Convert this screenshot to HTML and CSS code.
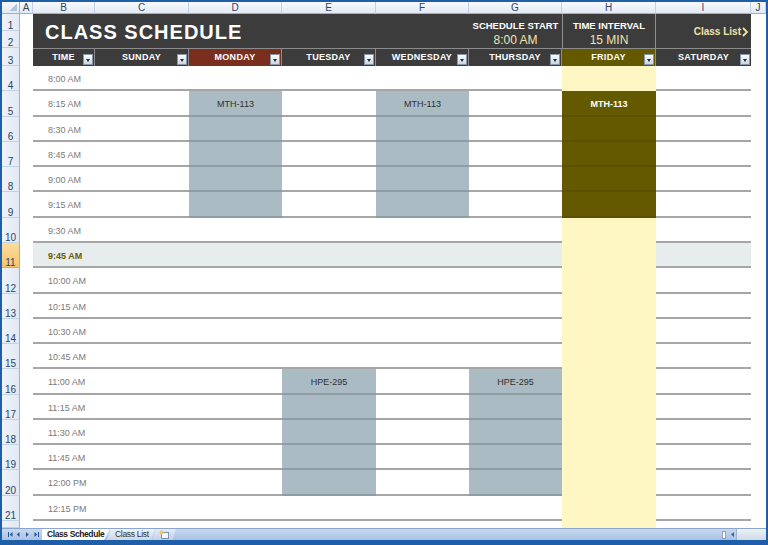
FILE: index.html
```html
<!DOCTYPE html>
<html>
<head>
<meta charset="utf-8">
<title>Class Schedule</title>
<link rel="stylesheet" href="styles.css">
</head>
<body>
<div class="window">
  <div class="sheet">
    <!-- column letters -->
    <div class="corner"></div>
    <div class="ch">A</div><div class="ch">B</div><div class="ch">C</div><div class="ch">D</div><div class="ch">E</div>
    <div class="ch">F</div><div class="ch">G</div><div class="ch">H</div><div class="ch">I</div><div class="ch">J</div>

    <!-- rows 1-2: banner -->
    <div class="rh">1</div>
    <div class="a span2"></div>
    <div class="band title">CLASS SCHEDULE</div>
    <div class="band info span2"><span class="lbl">SCHEDULE START</span><span class="val">8:00 AM</span></div>
    <div class="band info sep span2"><span class="lbl">TIME INTERVAL</span><span class="val">15 MIN</span></div>
    <div class="band link span2">Class List<svg class="chev" width="6" height="10" viewBox="0 0 6 10"><path d="M1 1 L5 5 L1 9" fill="none" stroke="#f1e3a9" stroke-width="1.8"/></svg></div>
    <div class="j span2"></div>
    <div class="rh">2</div>

    <!-- row 3: day headers -->
    <div class="rh">3</div><div class="a"></div>
    <div class="day">TIME<span class="dd"></span></div>
    <div class="day">SUNDAY<span class="dd"></span></div>
    <div class="day mon">MONDAY<span class="dd"></span></div>
    <div class="day">TUESDAY<span class="dd"></span></div>
    <div class="day">WEDNESDAY<span class="dd"></span></div>
    <div class="day">THURSDAY<span class="dd"></span></div>
    <div class="day fri">FRIDAY<span class="dd"></span></div>
    <div class="day last">SATURDAY<span class="dd"></span></div>
    <div class="j"></div>

    <!-- row 4 -->
    <div class="rh">4</div><div class="a"></div>
    <div class="c t">8:00 AM</div><div class="c"></div><div class="c"></div><div class="c"></div><div class="c"></div><div class="c"></div><div class="c y"></div><div class="c"></div><div class="j"></div>
    <!-- row 5 -->
    <div class="rh">5</div><div class="a"></div>
    <div class="c t">8:15 AM</div><div class="c"></div><div class="c blk">MTH-113</div><div class="c"></div><div class="c blk">MTH-113</div><div class="c"></div><div class="c ob">MTH-113</div><div class="c"></div><div class="j"></div>
    <!-- row 6 -->
    <div class="rh">6</div><div class="a"></div>
    <div class="c t">8:30 AM</div><div class="c"></div><div class="c blk"></div><div class="c"></div><div class="c blk"></div><div class="c"></div><div class="c ob"></div><div class="c"></div><div class="j"></div>
    <!-- row 7 -->
    <div class="rh">7</div><div class="a"></div>
    <div class="c t">8:45 AM</div><div class="c"></div><div class="c blk"></div><div class="c"></div><div class="c blk"></div><div class="c"></div><div class="c ob"></div><div class="c"></div><div class="j"></div>
    <!-- row 8 -->
    <div class="rh">8</div><div class="a"></div>
    <div class="c t">9:00 AM</div><div class="c"></div><div class="c blk"></div><div class="c"></div><div class="c blk"></div><div class="c"></div><div class="c ob"></div><div class="c"></div><div class="j"></div>
    <!-- row 9 -->
    <div class="rh">9</div><div class="a"></div>
    <div class="c t">9:15 AM</div><div class="c"></div><div class="c blk"></div><div class="c"></div><div class="c blk"></div><div class="c"></div><div class="c ob"></div><div class="c"></div><div class="j"></div>
    <!-- row 10 -->
    <div class="rh">10</div><div class="a"></div>
    <div class="c t">9:30 AM</div><div class="c"></div><div class="c"></div><div class="c"></div><div class="c"></div><div class="c"></div><div class="c y"></div><div class="c"></div><div class="j"></div>
    <!-- row 11 (current) -->
    <div class="rh sel">11</div><div class="a"></div>
    <div class="c t hl now">9:45 AM</div><div class="c hl"></div><div class="c hl"></div><div class="c hl"></div><div class="c hl"></div><div class="c hl"></div><div class="c y"></div><div class="c hl"></div><div class="j"></div>
    <!-- row 12 -->
    <div class="rh">12</div><div class="a"></div>
    <div class="c t">10:00 AM</div><div class="c"></div><div class="c"></div><div class="c"></div><div class="c"></div><div class="c"></div><div class="c y"></div><div class="c"></div><div class="j"></div>
    <!-- row 13 -->
    <div class="rh">13</div><div class="a"></div>
    <div class="c t">10:15 AM</div><div class="c"></div><div class="c"></div><div class="c"></div><div class="c"></div><div class="c"></div><div class="c y"></div><div class="c"></div><div class="j"></div>
    <!-- row 14 -->
    <div class="rh">14</div><div class="a"></div>
    <div class="c t">10:30 AM</div><div class="c"></div><div class="c"></div><div class="c"></div><div class="c"></div><div class="c"></div><div class="c y"></div><div class="c"></div><div class="j"></div>
    <!-- row 15 -->
    <div class="rh">15</div><div class="a"></div>
    <div class="c t">10:45 AM</div><div class="c"></div><div class="c"></div><div class="c"></div><div class="c"></div><div class="c"></div><div class="c y"></div><div class="c"></div><div class="j"></div>
    <!-- row 16 -->
    <div class="rh">16</div><div class="a"></div>
    <div class="c t">11:00 AM</div><div class="c"></div><div class="c"></div><div class="c blk">HPE-295</div><div class="c"></div><div class="c blk">HPE-295</div><div class="c y"></div><div class="c"></div><div class="j"></div>
    <!-- row 17 -->
    <div class="rh">17</div><div class="a"></div>
    <div class="c t">11:15 AM</div><div class="c"></div><div class="c"></div><div class="c blk"></div><div class="c"></div><div class="c blk"></div><div class="c y"></div><div class="c"></div><div class="j"></div>
    <!-- row 18 -->
    <div class="rh">18</div><div class="a"></div>
    <div class="c t">11:30 AM</div><div class="c"></div><div class="c"></div><div class="c blk"></div><div class="c"></div><div class="c blk"></div><div class="c y"></div><div class="c"></div><div class="j"></div>
    <!-- row 19 -->
    <div class="rh">19</div><div class="a"></div>
    <div class="c t">11:45 AM</div><div class="c"></div><div class="c"></div><div class="c blk"></div><div class="c"></div><div class="c blk"></div><div class="c y"></div><div class="c"></div><div class="j"></div>
    <!-- row 20 -->
    <div class="rh">20</div><div class="a"></div>
    <div class="c t">12:00 PM</div><div class="c"></div><div class="c"></div><div class="c blk"></div><div class="c"></div><div class="c blk"></div><div class="c y"></div><div class="c"></div><div class="j"></div>
    <!-- row 21 -->
    <div class="rh">21</div><div class="a"></div>
    <div class="c t">12:15 PM</div><div class="c"></div><div class="c"></div><div class="c"></div><div class="c"></div><div class="c"></div><div class="c y"></div><div class="c"></div><div class="j"></div>
    <!-- row 22 (cut off) -->
    <div class="rh"></div><div class="a"></div>
    <div class="p"></div><div class="p"></div><div class="p"></div><div class="p"></div><div class="p"></div><div class="p"></div><div class="p y"></div><div class="p"></div><div class="j"></div>
  </div>

  <div class="tabbar">
    <div class="nav">
      <svg width="40" height="11" viewBox="0 0 40 11">
        <rect x="6" y="3" width="1" height="5" fill="#2456a0"/>
        <polygon points="10.5,3 10.5,8 7.8,5.5" fill="#2456a0"/>
        <polygon points="17.5,3 17.5,8 14.8,5.5" fill="#2456a0"/>
        <polygon points="24,3 24,8 26.7,5.5" fill="#2456a0"/>
        <polygon points="32.5,3 32.5,8 35.2,5.5" fill="#2456a0"/>
        <rect x="36" y="3" width="1" height="5" fill="#2456a0"/>
      </svg>
    </div>
    <div class="tab active">Class Schedule</div>
    <div class="tab other">Class List</div>
    <div class="tab newtab">
      <svg width="12" height="9" viewBox="0 0 12 9">
        <rect x="3.5" y="2.5" width="7" height="6" fill="#f4f6fa" stroke="#7f93b1" stroke-width="1"/>
        <circle cx="3.5" cy="2.5" r="2" fill="#f4c64a"/>
      </svg>
    </div>
    <div class="tabfill"></div>
    <div class="scrollctl">
      <span class="split"></span>
      <svg width="8" height="11" viewBox="0 0 8 11"><polygon points="6,3 6,8 3,5.5" fill="#44618c"/></svg>
      <span class="hbar"></span>
    </div>
  </div>
</div>
</body>
</html>
```

FILE: styles.css
```css
* { box-sizing: border-box; margin: 0; padding: 0; }
html, body { margin: 0; background: #ffffff; }
body { font-family: "Liberation Sans", Arial, sans-serif; }

.window {
  width: 768px;
  height: 545px;
  border: 2px solid #1f5fa9;
  border-bottom: 5px solid #1f5fa9;
  display: flex;
  flex-direction: column;
  overflow: hidden;
  background: #ffffff;
}

.sheet {
  display: grid;
  grid-template-columns: 18px 13px 62px 94px 93px 94px 93px 93px 94px 95px 15px;
  grid-template-rows: 12px 17px 17px 18px
    25px 26px 25px 25px 25px 26px 25px 25px 26px 25px 25px 25px 26px 25px 25px 25px 26px 25px
    7px;
  flex: none;
}

/* column letter headers */
.corner {
  background-image:
    linear-gradient(to top left, #b3c4da 0 50%, transparent 50%),
    linear-gradient(#f6f9fc, #e3eaf4);
  background-repeat: no-repeat, no-repeat;
  background-position: right 2px bottom 2px, 0 0;
  background-size: 8px 8px, 100% 100%;
  border-right: 1px solid #9db3cd;
  border-bottom: 1px solid #9db3cd;
}
.ch {
  background: linear-gradient(#f8fafd, #e3eaf4);
  border-right: 1px solid #c3d1e3;
  border-bottom: 1px solid #9db3cd;
  color: #2b4566;
  font-size: 10px;
  display: flex;
  align-items: center;
  justify-content: center;
  line-height: 1;
}

/* row number headers */
.rh {
  background: linear-gradient(90deg, #eef3fa, #e1e9f4);
  border-right: 1px solid #9db3cd;
  border-bottom: 1px solid #c3d1e3;
  color: #2b4566;
  font-size: 10px;
  line-height: 8px;
  display: flex;
  align-items: flex-end;
  justify-content: center;
  padding-bottom: 0;
}
.rh.sel {
  background: linear-gradient(#fbdc9f, #f7c46e);
  border-right-color: #e9a443;
  border-bottom-color: #e9a443;
}

.span2 { grid-row: span 2; }
.a, .j { background: #ffffff; }

/* banner */
.band { background: #3c3c3c; }
.title {
  grid-column: span 5;
  grid-row: span 2;
  color: #ffffff;
  font-weight: bold;
  font-size: 20px;
  letter-spacing: 1px;
  padding-left: 12px;
  display: flex;
  align-items: center;
  padding-top: 2px;
}
.info {
  display: flex;
  flex-direction: column;
  align-items: center;
  justify-content: center;
  gap: 4px;
  padding-top: 5px;
}
.info.sep {
  border-left: 1px solid #8e8e8e;
  border-right: 1px solid #8e8e8e;
}
.lbl {
  color: #ffffff;
  font-weight: bold;
  font-size: 9.5px;
  line-height: 1;
}
.val {
  color: #f1e3a9;
  font-size: 12px;
  line-height: 1;
}
.link {
  display: flex;
  align-items: center;
  justify-content: flex-end;
  gap: 1px;
  padding-right: 3px;
  padding-top: 1px;
  color: #f1e3a9;
  font-weight: bold;
  font-size: 10px;
}
.chev { display: block; }

/* day header row */
.day {
  position: relative;
  background: #3c3c3c;
  color: #ffffff;
  font-weight: bold;
  font-size: 9px;
  letter-spacing: 0.3px;
  border-top: 1px solid #8b8b8b;
  border-right: 1px solid #8b8b8b;
  display: flex;
  align-items: center;
  justify-content: center;
  line-height: 1;
}
.day.last { border-right: none; }
.day.mon { background: #7a2f1e; }
.day.fri { background: #655900; }
.dd {
  position: absolute;
  right: 1px;
  bottom: 1px;
  width: 10px;
  height: 11px;
  background: linear-gradient(#fbfcfd, #cdd5e0);
  border: 1px solid #8596ad;
}
.dd::after {
  content: "";
  position: absolute;
  left: 2px;
  top: 4px;
  border-left: 2.5px solid transparent;
  border-right: 2.5px solid transparent;
  border-top: 3px solid #1d2f4a;
}

/* data cells */
.c {
  border-bottom: 2px solid #a6a6a6;
  background: #ffffff;
  color: #2f2f2f;
  font-size: 9px;
  display: flex;
  align-items: center;
  justify-content: center;
  line-height: 1;
  padding-top: 3px;
}
.c.t {
  justify-content: flex-start;
  padding-left: 15px;
  color: #7a7a7a;
}
.c.hl { background: #e7ecec; }
.c.now { color: #6b5a00; font-weight: bold; }
.c.blk { background: #abbbc4; border-bottom-color: #8e9ca4; }
.c.y, .p.y { background: #fff7c3; border-bottom-color: #fff7c3; }
.c.ob { background: #655900; border-bottom-color: #5a5000; color: #ffffff; font-weight: bold; }
.p { background: #ffffff; }

/* sheet tabs bar */
.tabbar {
  flex: none;
  height: 12px;
  display: flex;
  align-items: stretch;
  background: linear-gradient(#c9d8ee, #a9c2e5);
  border-top: 1px solid #8aa6cf;
}
.nav {
  width: 40px;
  display: flex;
  align-items: center;
}
.nav svg { display: block; }
.tab {
  display: flex;
  align-items: center;
  font-size: 8.5px;
  line-height: 1;
  color: #1a1a1a;
}
.tab.active {
  width: 68px;
  padding-left: 5px;
  background: #ffffff;
  font-weight: bold;
  letter-spacing: -0.4px;
  clip-path: polygon(0 0, 100% 0, 91% 100%, 0 100%);
}
.tab.other {
  width: 48px;
  margin-left: -3px;
  padding-left: 8px;
  background: linear-gradient(#eef2f8, #cbd7e8);
  color: #333333;
  letter-spacing: -0.3px;
  clip-path: polygon(0 100%, 8% 0, 100% 0, 92% 100%);
}
.tab.newtab {
  width: 24px;
  margin-left: -3px;
  padding-left: 6px;
  background: linear-gradient(#e4ebf5, #c2d1e6);
  clip-path: polygon(0 100%, 14% 0, 100% 0, 86% 100%);
}
.tab.newtab svg { display: block; }
.tabfill { flex: 1; }
.scrollctl {
  width: 44px;
  display: flex;
  align-items: center;
}
.split {
  width: 4px;
  height: 8px;
  background: #ffffff;
  border: 1px solid #8ea3c1;
  margin-right: 2px;
}
.scrollctl svg { display: block; }
.hbar {
  flex: 1;
  align-self: stretch;
  background: linear-gradient(#eef2f7, #cfd9e6);
  border-left: 1px solid #9fb3cf;
}
```
